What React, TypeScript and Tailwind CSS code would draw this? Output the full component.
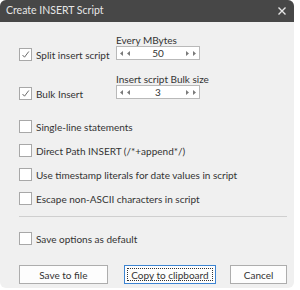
import React from 'react';

const FONT = 'Lato, "Liberation Sans", Arial, sans-serif';

function Check({ checked }: { checked?: boolean }) {
  return (
    <span className="w-[13px] h-[13px] border border-[#a8a8a8] bg-white flex items-center justify-center shrink-0">
      {checked && (
        <svg width="9" height="9" viewBox="0 0 9 9">
          <path d="M1.5 5 L3.5 7.2 L7.8 1.5" fill="none" stroke="#6b6b6b" strokeWidth="1" />
        </svg>
      )}
    </span>
  );
}

function Arrows({ dir }: { dir: 'left' | 'right' }) {
  const d = dir === 'left' ? 'M3 0 L0 2.5 L3 5 Z' : 'M0 0 L3 2.5 L0 5 Z';
  return (
    <span className="flex gap-[4px] items-center">
      <svg width="3" height="5" viewBox="0 0 3 5"><path d={d} fill="#7a7a7a" /></svg>
      <svg width="3" height="5" viewBox="0 0 3 5"><path d={d} fill="#7a7a7a" /></svg>
    </span>
  );
}

function Spin({ label, value }: { label: string; value: string }) {
  return (
    <div className="flex flex-col">
      <span className="text-[10px] leading-[12px] text-[#333] whitespace-nowrap">{label}</span>
      <div className="w-[84px] h-[14px] border border-[#b9b9b9] bg-white flex items-center justify-between px-[3px]">
        <Arrows dir="left" />
        <span className="text-[10px] leading-[12px] text-[#333]">{value}</span>
        <Arrows dir="right" />
      </div>
    </div>
  );
}

function Option({ label, checked }: { label: string; checked?: boolean }) {
  return (
    <div className="flex items-center gap-[4px] h-[13px]">
      <Check checked={checked} />
      <span className="text-[10px] leading-[12px] text-[#333] whitespace-nowrap">{label}</span>
    </div>
  );
}

export default function App() {
  return (
    <div className="w-[300px] h-[290px] bg-white" style={{ fontFamily: FONT }}>
      <div className="w-[294px] h-[288px] rounded-[6px] bg-[#f0f0f0] overflow-hidden flex flex-col">
        <div className="h-[22px] bg-[#474747] flex items-center justify-between pl-[6px] pr-[8px]">
          <span className="text-[10.5px] text-[#e6e6e6]">Create INSERT Script</span>
          <svg width="8" height="8" viewBox="0 0 8 8">
            <path d="M0.5 0.5 L7.5 7.5 M7.5 0.5 L0.5 7.5" stroke="#e6e6e6" strokeWidth="1.4" />
          </svg>
        </div>

        <div className="flex flex-col pl-[19px] pr-[7px] pt-[12px]">
          <div className="flex items-end">
            <div className="w-[97px] mb-[-1px]">
              <Option label="Split insert script" checked />
            </div>
            <Spin label="Every MBytes" value="50" />
          </div>

          <div className="flex items-end mt-[13px]">
            <div className="w-[97px] mb-[-1px]">
              <Option label="Bulk Insert" checked />
            </div>
            <Spin label="Insert script Bulk size" value="3" />
          </div>

          <div className="flex flex-col gap-[11px] mt-[21px]">
            <Option label="Single-line statements" />
            <Option label="Direct Path INSERT (/*+append*/)" />
            <Option label="Use timestamp literals for date values in script" />
            <Option label="Escape non-ASCII characters in script" />
          </div>

          <div className="h-px bg-[#cfcfcf] w-[268px] mt-[11px]" />

          <div className="mt-[15px]">
            <Option label="Save options as default" />
          </div>

          <div className="flex mt-[20px] text-[10px] text-[#333] whitespace-nowrap">
            <button className="w-[89px] h-[19px] border border-[#adadad] bg-[#fdfdfd] leading-[12px]">Save to file</button>
            <button className="w-[93px] h-[19px] ml-[16px] border border-[#3c84d2] bg-[#fdfdfd] p-[2px]">
              <span className="w-full h-full border border-dotted border-[#333] flex items-center justify-center leading-[12px]">Copy to clipboard</span>
            </button>
            <button className="w-[57px] h-[19px] ml-[14px] border border-[#adadad] bg-[#fdfdfd] leading-[12px]">Cancel</button>
          </div>
        </div>
      </div>
    </div>
  );
}
